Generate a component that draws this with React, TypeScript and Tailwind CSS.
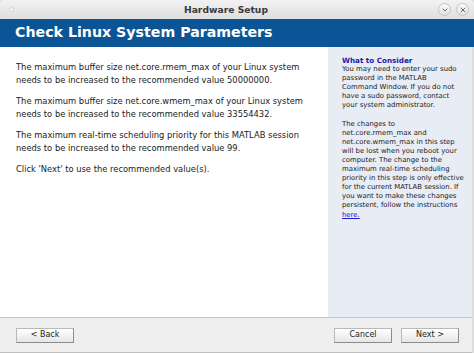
import { ChevronDown, X } from "lucide-react";

const paragraphs = [
  "The maximum buffer size net.core.rmem_max of your Linux system needs to be increased to the recommended value 50000000.",
  "The maximum buffer size net.core.wmem_max of your Linux system needs to be increased to the recommended value 33554432.",
  "The maximum real-time scheduling priority for this MATLAB session needs to be increased to the recommended value 99.",
  "Click 'Next' to use the recommended value(s).",
];

const considerA = [
  "You may need to enter your sudo",
  "password in the MATLAB",
  "Command Window. If you do not",
  "have a sudo password, contact",
  "your system administrator.",
];

const considerB = [
  "The changes to",
  "net.core.rmem_max and",
  "net.core.wmem_max in this step",
  "will be lost when you reboot your",
  "computer. The change to the",
  "maximum real-time scheduling",
  "priority in this step is only effective",
  "for the current MATLAB session. If",
  "you want to make these changes",
  "persistent, follow the instructions",
];

function WinButton({ children }: { children: React.ReactNode }) {
  return (
    <div className="w-[13px] h-[13px] rounded-full border border-[#c4c4c4] bg-gradient-to-b from-[#fafafa] to-[#e2e2e2] flex items-center justify-center text-[#6a6a6a]">
      {children}
    </div>
  );
}

function FooterButton({ label }: { label: string }) {
  return (
    <button className="w-[58px] h-[15px] border border-[#b9b9b9] border-r-[#8c8c8c] border-b-[#8c8c8c] bg-gradient-to-b from-[#ffffff] to-[#e6e6e6] text-[8px] text-[#222] leading-none flex items-center justify-center">
      {label}
    </button>
  );
}

export default function App() {
  return (
    <div className="w-[474px] h-[353px] bg-[#dcdcdc] flex flex-col overflow-hidden font-['DejaVu_Sans',sans-serif]">
      {/* Title bar */}
      <div className="h-[19px] rounded-t-[4px] bg-gradient-to-b from-[#f2f2f2] to-[#dedede] flex items-center px-[4px]">
        <div className="w-[5px] h-[5px] rounded-full bg-[#f8f8f8] border border-[#d0d0d0] ml-[5px]" />
        <div className="flex-1 text-center text-[9.2px] font-bold text-[#3a3a3a] pt-[1px]">Hardware Setup</div>
        <div className="flex gap-[5px] mr-[1px]">
          <WinButton>
            <ChevronDown size={8} strokeWidth={3} />
          </WinButton>
          <WinButton>
            <X size={8} strokeWidth={3} />
          </WinButton>
        </div>
      </div>

      {/* Header */}
      <div className="h-[28px] bg-[#0b5597] flex items-center pl-[15px]">
        <span className="text-white font-bold text-[14.2px]">Check Linux System Parameters</span>
      </div>

      {/* Body */}
      <div className="h-[270px] flex bg-white mr-[2px]">
        <div className="w-[328px] pl-[16px] pt-[14px] flex flex-col gap-[8px] text-[8.35px] leading-[13px] text-[#222]">
          {paragraphs.map((p) => (
            <p key={p} className="w-[300px]">
              {p}
            </p>
          ))}
        </div>
        <div className="flex-1 bg-[#e8ecf4] pl-[14px] pt-[9px] text-[6.9px] leading-[9.1px] text-[#222] whitespace-nowrap">
          <div className="font-bold text-[#1a1aa8] text-[7.2px]">What to Consider</div>
          {considerA.map((l) => (
            <div key={l}>{l}</div>
          ))}
          <div className="mt-[9px]">
            {considerB.map((l) => (
              <div key={l}>{l}</div>
            ))}
            <span className="text-[#1a1ad0] underline">here.</span>
          </div>
        </div>
      </div>

      {/* Footer */}
      <div className="flex-1 border-t border-[#c8c8c8] bg-[#eeeeee] flex items-center justify-between pl-[16px] pr-[13px] mr-[2px] border-b border-b-[#c0c0c0]">
        <FooterButton label="< Back" />
        <div className="flex gap-[9px]">
          <FooterButton label="Cancel" />
          <FooterButton label="Next >" />
        </div>
      </div>
    </div>
  );
}
